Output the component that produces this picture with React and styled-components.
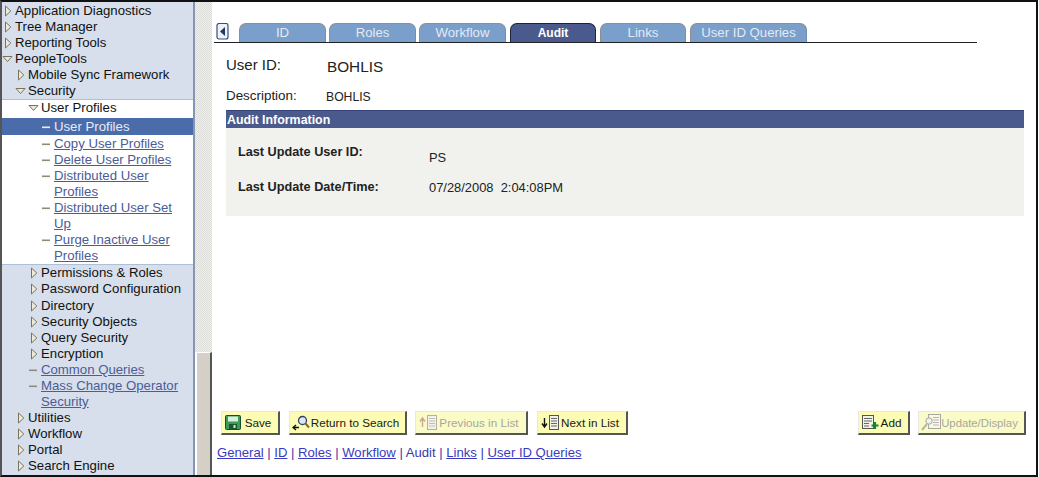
import React from "react";
import styled, { createGlobalStyle } from "styled-components";

const Global = createGlobalStyle`
  html, body { margin: 0; padding: 0; background: #fff; overflow: hidden; }
  * { box-sizing: border-box; }
`;

const Frame = styled.div`
  width: 1038px; height: 477px;
  display: flex;
  border-top: 2px solid #111;
  border-left: 2px solid #555;
  border-right: 2px solid #111;
  border-bottom: 2px solid #111;
  background: #fff;
  font-family: "Liberation Sans", Arial, sans-serif;
  overflow: hidden;
`;

const Sidebar = styled.nav`
  width: 193px; flex: none;
  background: #d6dfeb;
  border-right: 2px solid #8496b4;
  padding-top: 1px;
  font-size: 13.2px;
  line-height: 16px;
  color: #111;
  overflow: hidden;
`;
const Expanded = styled.div`
  background: #fff;
  border-top: 1px solid #aebfd8;
  border-bottom: 1px solid #aebfd8;
`;
const Row = styled.div`
  display: flex;
  padding-left: ${p => p.$level * 13}px;
  padding-right: 4px;
  padding-top: ${p => p.$pt || 0}px;
  min-height: ${p => p.$h || 16}px;
  background: ${p => (p.$selected ? "#4a6cab" : "transparent")};
  color: ${p => (p.$selected ? "#e8edf5" : "#111")};
  margin-top: ${p => p.$mt || 0}px;
`;
const IconBox = styled.span`
  width: 13px; height: 16px; flex: none;
  padding-right: 2px;
  display: flex; align-items: center; justify-content: center;
`;
const Label = styled.span``;
const TreeLink = styled.a`
  color: #4b5c96;
  text-decoration: underline;
`;

const Gutter = styled.div`
  width: 17px; flex: none;
  display: flex; flex-direction: column;
`;
const GutterTop = styled.div`
  height: 350px;
  background: repeating-conic-gradient(#dcdcd8 0 25%, #efefec 0 50%) 0 0 / 2px 2px;
`;
const GutterBottom = styled.div`
  flex: 1;
  margin-left: 2px;
  background: #d4d0c8;
  border-right: 2px solid #555;
  border-top: 1px solid #fff;
`;

const Main = styled.main`
  flex: 1; min-width: 0;
  display: flex; flex-direction: column;
  padding: 21px 12px 0 2px;
`;
const TabBar = styled.div`
  display: flex; align-items: flex-end;
  width: 763px; height: 20px;
  border-bottom: 1px solid #222;
`;
const Scroll = styled.span`
  width: 14px; height: 17px; margin: 0 9px 2px 2px; flex: none;
  display: flex;
`;
const Tab = styled.div`
  width: ${p => p.$w}px; height: 19px;
  margin-right: ${p => p.$gap}px;
  flex: none;
  text-align: center;
  font-size: ${p => (p.$active ? 12 : 13.2)}px; line-height: 18px;
  font-weight: ${p => (p.$active ? 700 : 400)};
  background: ${p => (p.$active ? "#4a5a8c" : "#7a9fcb")};
  color: ${p => (p.$active ? "#fff" : "#e3eaf3")};
  border: 1px solid ${p => (p.$active ? "#1b2340" : "#8f8f8b")};
  border-right-color: ${p => (p.$active ? "#1b2340" : "#6f8fb8")};
  border-bottom: none;
  border-radius: 7px 7px 0 0;
`;

const Body = styled.div`
  display: flex; flex-direction: column;
  padding-left: 12px;
  width: 810px;
`;
const IdRow = styled.div`
  display: flex; align-items: baseline;
  margin-top: 10px; height: 20px;
  color: #222;
`;
const IdLabel = styled.span`
  width: 101px; font-size: 15px; line-height: 20px;
`;
const IdValue = styled.span`
  font-size: 15.3px; line-height: 24px; position: relative; top: 2px;
`;
const DescRow = styled.div`
  display: flex; align-items: baseline;
  margin-top: 16px; height: 14px;
  font-size: 13.4px; line-height: 14px; color: #222;
`;
const DescLabel = styled.span`width: 100px;`;
const DescValue = styled.span`position: relative; top: 1px; font-size: 12.2px;`;
const Head = styled.div`
  margin-top: 7px; height: 18px;
  background: #4a5a8c;
  border-top: 1px solid #35457a;
  color: #fff; font-weight: 700; font-size: 12.4px; line-height: 19px;
  padding-left: 1px;
`;
const Panel = styled.div`
  height: 88px;
  background: #f1f2ee;
  padding: 16px 0 0 12px;
  font-size: 12.7px; color: #222;
`;
const PanelRow = styled.div`
  display: flex; height: 35px;
`;
const PanelLabel = styled.span`
  width: 191px; font-weight: 700; line-height: 16px;
`;
const PanelValue = styled.span`
  white-space: pre; line-height: 16px; font-size: 12.9px;
  position: relative; top: ${p => p.$top}px;
`;

const Footer = styled.div`
  margin-top: auto;
  display: flex; flex-direction: column;
`;
const Buttons = styled.div`
  display: flex; padding-left: 7px; width: 813px;
  position: relative; top: -1px;
`;
const Btn = styled.div`
  width: ${p => p.$w}px; height: 24px;
  margin-right: ${p => p.$gap || 0}px;
  margin-left: ${p => p.$ml || 0}px;
  flex: none;
  display: flex; align-items: center; justify-content: center; gap: ${p => p.$iconGap ?? 1}px;
  padding-right: 4px;
  background: ${p => (p.$off ? "#fbfbc8" : "#fcfcb4")};
  color: ${p => (p.$off ? "#a8a8a0" : "#1a1a1a")};
  border: 1px solid #e8e8e0;
  border-right: 2px solid #555;
  border-bottom: 2px solid #555;
  font-size: ${p => p.$fs || 11.7}px; white-space: nowrap;
`;
const Links = styled.div`
  margin: 9px 0 14px 3px;
  font-size: 13.1px; line-height: 16px; color: #3a3aa8;
  white-space: pre;
`;
const FootLink = styled.a`color: #3a3ac0; text-decoration: underline;`;

const Tri = ({ open }) =>
  open ? (
    <svg width="11" height="8" viewBox="0 0 11 8"><path d="M1 1.500h9L5.500 6.500z" fill="#ece9d8" stroke="#77735e" /></svg>
  ) : (
    <svg width="8" height="12" viewBox="0 0 8 12"><path d="M1.500 1v10L6.800 6z" fill="#ece9d8" stroke="#77735e" /></svg>
  );
const Dash = ({ light }) => (
  <svg width="9" height="3" viewBox="0 0 9 3"><rect y="0.500" width="8" height="1.600" fill={light ? "#e8edf5" : "#8f8b78"} /></svg>
);

const FloppyIcon = () => (
  <svg width="16" height="15" viewBox="0 0 16 15">
    <rect x="0.500" y="0.500" width="15" height="14" rx="1" fill="#3f9a5a" stroke="#14502c" />
    <rect x="3" y="1.500" width="10" height="5" fill="#d9efd9" />
    <rect x="4" y="9" width="8" height="5" fill="#16582f" />
    <rect x="8.500" y="10" width="2" height="3" fill="#cfe8cf" />
  </svg>
);
const SearchIcon = () => (
  <svg width="18" height="16" viewBox="0 0 18 16">
    <circle cx="10.500" cy="5.500" r="4" fill="#dce8f6" stroke="#33415e" strokeWidth="1.300" />
    <path d="M13.500 8.500l3.500 4" stroke="#8a6a2a" strokeWidth="2" />
    <path d="M7 12.500H2M4 10l-3 2.500L4 15" fill="none" stroke="#111" strokeWidth="1.300" />
  </svg>
);
const ListArrow = ({ down, off }) => {
  const c = off ? "#a8a8a0" : "#111";
  return (
    <svg width="19" height="15" viewBox="0 0 19 15">
      {down ? (
        <path d="M3.500 3v8M1 8.500l2.500 3.500L6 8.500" fill="none" stroke={c} strokeWidth="1.400" />
      ) : (
        <path d="M3.500 12V4M1 6.500L3.500 3 6 6.500" fill="none" stroke={off ? "#c8a890" : c} strokeWidth="1.400" />
      )}
      <rect x="8.500" y="0.500" width="9" height="14" fill="#f2f2e8" stroke={off ? "#b0b0a8" : "#555"} />
      <path d="M10 3.500h6M10 6h6M10 8.500h6M10 11h6" stroke={off ? "#c0c0b8" : "#666"} />
    </svg>
  );
};
const AddIcon = () => (
  <svg width="18" height="15" viewBox="0 0 18 15">
    <rect x="0.500" y="0.500" width="11" height="13" fill="#f2f2e8" stroke="#555" />
    <path d="M2 3.500h8M2 6h8M2 8.500h5M2 11h5" stroke="#666" />
    <path d="M13 7v7M9.500 10.500h7" stroke="#17803a" strokeWidth="2.200" />
  </svg>
);
const UpdateIcon = () => (
  <svg width="20" height="17" viewBox="0 0 20 17">
    <rect x="7.500" y="0.500" width="12" height="14" fill="#f8f8e4" stroke="#a8a8a0" />
    <path d="M12 3.500h6M12 6h6M12 8.500h6M12 11h6" stroke="#b8b8b0" />
    <circle cx="8" cy="7" r="3.200" fill="#eef2f0" stroke="#a8a8a0" />
    <path d="M6 10l-5 6" stroke="#b8b8a8" strokeWidth="2" />
  </svg>
);

const Item = ({ level, kind, children, link, selected, h, mt, pt }) => (
  <Row $level={level} $selected={selected} $h={h} $mt={mt} $pt={pt}>
    <IconBox>
      {kind === "dash" ? <Dash light={selected} /> : <Tri open={kind === "open"} />}
    </IconBox>
    {link ? <TreeLink>{children}</TreeLink> : <Label>{children}</Label>}
  </Row>
);

const tabs = [
  ["ID", 87, 3], ["Roles", 87, 3], ["Workflow", 87, 4],
  ["Audit", 86, 4], ["Links", 86, 4], ["User ID Queries", 117, 0],
];

export default function App() {
  return (
    <>
      <Global />
      <Frame>
        <Sidebar>
          <Item level={0} kind="closed">Application Diagnostics</Item>
          <Item level={0} kind="closed">Tree Manager</Item>
          <Item level={0} kind="closed">Reporting Tools</Item>
          <Item level={0} kind="open">PeopleTools</Item>
          <Item level={1} kind="closed">Mobile Sync Framework</Item>
          <Item level={1} kind="open">Security</Item>
          <Expanded>
            <Item level={2} kind="open" h={18}>User Profiles</Item>
            <Item level={3} kind="dash" selected h={17} pt={1}>User Profiles</Item>
            <Item level={3} kind="dash" link mt={1}>Copy User Profiles</Item>
            <Item level={3} kind="dash" link>Delete User Profiles</Item>
            <Item level={3} kind="dash" link>Distributed User Profiles</Item>
            <Item level={3} kind="dash" link>Distributed User Set Up</Item>
            <Item level={3} kind="dash" link>Purge Inactive User Profiles</Item>
          </Expanded>
          <Item level={2} kind="closed">Permissions &amp; Roles</Item>
          <Item level={2} kind="closed">Password Configuration</Item>
          <Item level={2} kind="closed" mt={1}>Directory</Item>
          <Item level={2} kind="closed">Security Objects</Item>
          <Item level={2} kind="closed">Query Security</Item>
          <Item level={2} kind="closed">Encryption</Item>
          <Item level={2} kind="dash" link>Common Queries</Item>
          <Item level={2} kind="dash" link>Mass Change Operator Security</Item>
          <Item level={1} kind="closed">Utilities</Item>
          <Item level={1} kind="closed">Workflow</Item>
          <Item level={1} kind="closed">Portal</Item>
          <Item level={1} kind="closed">Search Engine</Item>
        </Sidebar>
        <Gutter>
          <GutterTop />
          <GutterBottom />
        </Gutter>
        <Main>
          <TabBar>
            <Scroll>
              <svg width="14" height="17" viewBox="0 0 14 17">
                <rect x="1" y="0.500" width="11" height="15.500" rx="2" fill="#eef2f8" stroke="#33507e" strokeWidth="1.200" />
                <path d="M9 4v9L4 8.500z" fill="#1f3a66" />
              </svg>
            </Scroll>
            {tabs.map(([t, w, g]) => (
              <Tab key={t} $w={w} $gap={g} $active={t === "Audit"}>{t}</Tab>
            ))}
          </TabBar>
          <Body>
            <IdRow><IdLabel>User ID:</IdLabel><IdValue>BOHLIS</IdValue></IdRow>
            <DescRow><DescLabel>Description:</DescLabel><DescValue>BOHLIS</DescValue></DescRow>
            <Head>Audit Information</Head>
            <Panel>
              <PanelRow>
                <PanelLabel>Last Update User ID:</PanelLabel>
                <PanelValue $top={6}>PS</PanelValue>
              </PanelRow>
              <PanelRow>
                <PanelLabel>Last Update Date/Time:</PanelLabel>
                <PanelValue $top={1}>07/28/2008  2:04:08PM</PanelValue>
              </PanelRow>
            </Panel>
          </Body>
          <Footer>
            <Buttons>
              <Btn $w={59} $gap={9} $iconGap={4}><FloppyIcon />Save</Btn>
              <Btn $w={118} $gap={8}><SearchIcon />Return to Search</Btn>
              <Btn $w={113} $gap={9} $off><ListArrow off />Previous in List</Btn>
              <Btn $w={91} $gap={0}><ListArrow down />Next in List</Btn>
              <Btn $w={52} $ml={230} $gap={8}><AddIcon />Add</Btn>
              <Btn $w={108} $off $iconGap={0} $fs={11.3}><UpdateIcon />Update/Display</Btn>
            </Buttons>
            <Links>
              <FootLink>General</FootLink>{" | "}<FootLink>ID</FootLink>{" | "}<FootLink>Roles</FootLink>{" | "}<FootLink>Workflow</FootLink>{" | Audit | "}<FootLink>Links</FootLink>{" | "}<FootLink>User ID Queries</FootLink>
            </Links>
          </Footer>
        </Main>
      </Frame>
    </>
  );
}
